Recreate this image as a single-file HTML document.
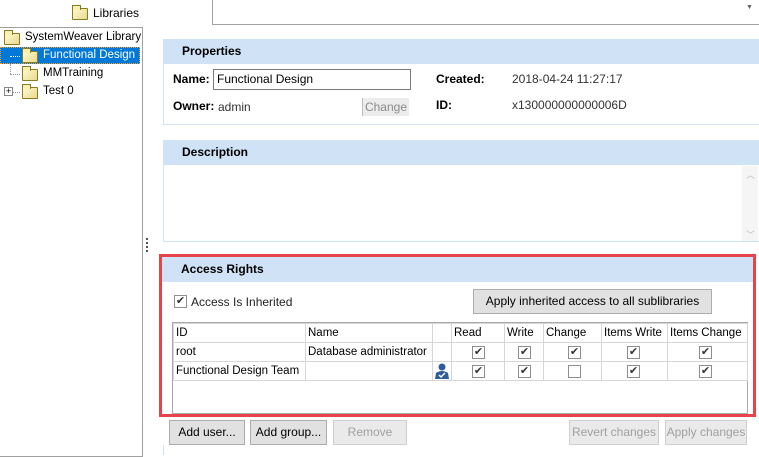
<!DOCTYPE html>
<html><head><style>
*{box-sizing:border-box;margin:0;padding:0}
body{width:759px;height:452px;background:#fff;font-family:"Liberation Sans",sans-serif;font-size:12px;color:#000;position:relative;overflow:hidden}
.a{position:absolute;white-space:nowrap}
.fold{position:absolute;width:16px;height:12px;border:1px solid #8a7a20;background:linear-gradient(135deg,#fffbd0,#e8d890);border-radius:1px}
.fold:before{content:"";position:absolute;left:-1px;top:-4px;width:7px;height:4px;border:1px solid #8a7a20;border-bottom:none;background:#f8f0b0}
.hdr{position:absolute;background:#cfe2f6;font-weight:bold;font-size:12px;padding-left:19px}
.btn{position:absolute;height:25px;border:1px solid #adadad;background:#e1e1e1;text-align:center;line-height:23px;font-size:12px}
.dis{color:#a0a0a0;border-color:#cfcfcf;background:#eaeaea}
.cb{position:absolute;width:13px;height:13px;border:1px solid #8e8e8e;background:#fff;font-size:11px;line-height:11px;text-align:center;color:#333}
table{border-collapse:collapse;position:absolute;left:173px;top:323px;width:574px;table-layout:fixed}
td{border:1px solid #d6d6d6;height:19px;padding:0 2px;font-size:11.5px;position:relative;white-space:nowrap;overflow:hidden}
.tr{font-size:11.5px}
</style></head><body>
<!-- top -->
<div class="fold" style="left:72px;top:8px"></div>
<div class="a" style="left:93px;top:6px">Libraries</div>
<div class="a" style="left:212px;top:-1px;width:548px;height:26px;border-left:1px solid #a0a0a0;border-bottom:1px solid #a0a0a0"></div>
<div class="a" style="left:746px;top:4px;font-size:7px;color:#666">▼</div>
<!-- tree -->
<div class="a" style="left:-1px;top:27px;width:144px;height:430px;border:1px solid #a0a0a0"></div>
<div class="a" style="left:0;top:47px;width:140px;height:17px;background:#0078d7;border:1px dotted #f0a030"></div>
<div class="fold" style="left:4px;top:33px"></div>
<div class="a tr" style="left:25px;top:31px">SystemWeaver Library</div>
<div class="a" style="left:10px;top:56px;width:10px;border-top:1px dotted #fff"></div>
<div class="fold" style="left:22px;top:51px"></div>
<div class="a tr" style="left:43px;top:49px;color:#fff">Functional Design</div>
<div class="a" style="left:10px;top:64px;height:10px;border-left:1px dotted #999"></div>
<div class="a" style="left:10px;top:74px;width:10px;border-top:1px dotted #999"></div>
<div class="fold" style="left:22px;top:69px"></div>
<div class="a tr" style="left:43px;top:67px">MMTraining</div>
<div class="a" style="left:4px;top:87px;width:9px;height:9px;border:1px solid #888;font-size:9px;line-height:7px;text-align:center">+</div>
<div class="a" style="left:13px;top:92px;width:7px;border-top:1px dotted #999"></div>
<div class="fold" style="left:22px;top:87px"></div>
<div class="a tr" style="left:43px;top:85px">Test 0</div>
<!-- splitter -->
<div class="a" style="left:146px;top:238px;width:2px;height:14px;background:repeating-linear-gradient(#555 0 2px,transparent 2px 4px)"></div>
<!-- properties -->
<div class="a" style="left:163px;top:39px;width:600px;height:86px;border:1px solid #cfe2f6"></div>
<div class="hdr" style="left:163px;top:39px;width:600px;height:25px;line-height:25px">Properties</div>
<div class="a" style="left:173px;top:72px;font-weight:bold">Name:</div>
<div class="a" style="left:213px;top:69px;width:198px;height:21px;border:1px solid #7a7a7a;padding:2px 3px">Functional Design</div>
<div class="a" style="left:173px;top:99px;font-weight:bold">Owner:</div>
<div class="a" style="left:218px;top:100px;color:#333">admin</div>
<div class="a" style="left:362px;top:98px;width:47px;height:18px;background:#ececec;border-left:1px solid #bbb;color:#8a8a8a;text-align:center;line-height:18px">Change</div>
<div class="a" style="left:436px;top:72px;font-weight:bold">Created:</div>
<div class="a" style="left:512px;top:72px;color:#333">2018-04-24 11:27:17</div>
<div class="a" style="left:436px;top:98px;font-weight:bold">ID:</div>
<div class="a" style="left:512px;top:98px;color:#333">x130000000000006D</div>
<!-- description -->
<div class="a" style="left:163px;top:140px;width:600px;height:102px;border:1px solid #cfe2f6"></div>
<div class="hdr" style="left:163px;top:140px;width:600px;height:25px;line-height:25px">Description</div>
<div class="a" style="left:742px;top:166px;width:16px;height:75px;background:#f5f5f5"></div>
<div class="a" style="left:746px;top:168px;font-size:9px;color:#bbb">︿</div>
<div class="a" style="left:746px;top:228px;font-size:9px;color:#bbb">﹀</div>
<!-- access rights -->
<div class="hdr" style="left:162px;top:257px;width:592px;height:25px;line-height:25px">Access Rights</div>
<div class="cb" style="left:174px;top:295px">✔</div>
<div class="a" style="left:191px;top:295px;color:#222">Access Is Inherited</div>
<div class="btn" style="left:473px;top:289px;width:239px">Apply inherited access to all sublibraries</div>
<div class="a" style="left:172px;top:322px;width:576px;height:92px;border:1px solid #a9a9a9;border-top:2px solid #a9a9a9"></div>
<table>
<colgroup><col style="width:132px"><col style="width:127px"><col style="width:19px"><col style="width:53px"><col style="width:39px"><col style="width:58px"><col style="width:66px"><col style="width:80px"></colgroup>
<tr><td>ID</td><td>Name</td><td></td><td>Read</td><td>Write</td><td>Change</td><td>Items Write</td><td>Items Change</td></tr>
<tr><td>root</td><td>Database administrator</td><td></td>
<td><div class="cb" style="left:20px;top:3px">✔</div></td><td><div class="cb" style="left:13px;top:3px">✔</div></td><td><div class="cb" style="left:24px;top:3px">✔</div></td><td><div class="cb" style="left:25px;top:3px">✔</div></td><td><div class="cb" style="left:31px;top:3px">✔</div></td></tr>
<tr><td>Functional Design Team</td><td></td><td><svg width="14" height="16" style="position:absolute;left:2px;top:1px" viewBox="0 0 14 16"><circle cx="7" cy="4" r="3.5" fill="#2f5c9a"/><path d="M0 16 L1 10 Q7 6 13 10 L14 16Z" fill="#2f5c9a"/><path d="M4 12 L6 14 L10 10" stroke="#fff" stroke-width="1.5" fill="none"/></svg></td>
<td><div class="cb" style="left:20px;top:3px">✔</div></td><td><div class="cb" style="left:13px;top:3px">✔</div></td><td><div class="cb" style="left:24px;top:3px"></div></td><td><div class="cb" style="left:25px;top:3px">✔</div></td><td><div class="cb" style="left:31px;top:3px">✔</div></td></tr>
</table>
<div class="a" style="left:159px;top:254px;width:597px;height:163px;border:3px solid #e8434b"></div>
<!-- buttons -->
<div class="btn" style="left:169px;top:420px;width:76px">Add user...</div>
<div class="btn" style="left:250px;top:420px;width:77px">Add group...</div>
<div class="btn dis" style="left:333px;top:420px;width:74px">Remove</div>
<div class="btn dis" style="left:569px;top:420px;width:90px">Revert changes</div>
<div class="btn dis" style="left:665px;top:420px;width:82px">Apply changes</div>
<div class="a" style="left:163px;top:445px;width:1px;height:10px;background:#cfe2f6"></div>
</body></html>
